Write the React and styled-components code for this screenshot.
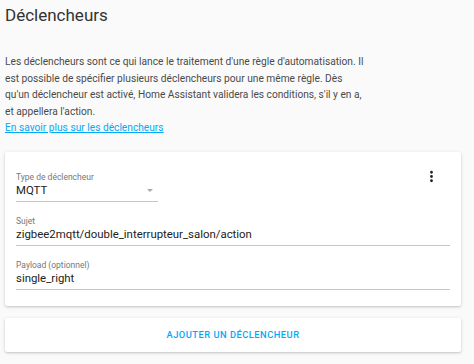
import React from 'react';
import styled, { createGlobalStyle } from 'styled-components';

const GlobalStyle = createGlobalStyle`
  html, body {
    margin: 0;
    padding: 0;
    background: #fafafa;
  }
  body {
    font-family: Roboto, 'Noto Sans', sans-serif;
    -webkit-font-smoothing: antialiased;
  }
`;

const Section = styled.div`
  padding: 3px 13px 12px 5px;
`;

const Title = styled.h1`
  margin: 0;
  font-size: 17px;
  line-height: 24px;
  font-weight: 400;
  color: #333;
`;

const Intro = styled.p`
  margin: 27px 0 15px;
  max-width: 362px;
  font-size: 10.2px;
  line-height: 16.5px;
  color: #4a4a4a;
`;

const Link = styled.a`
  color: #03a9f4;
  text-decoration: underline;
`;

const Card = styled.div`
  background: #fff;
  border-radius: 2px;
  box-shadow: 0 1px 2px rgba(0, 0, 0, 0.14), 0 1px 4px rgba(0, 0, 0, 0.1);
  margin-bottom: 12px;
  padding: ${p => (p.$action ? '0' : '20px 11px 16px')};
`;

const HeaderRow = styled.div`
  display: flex;
  align-items: flex-start;
  justify-content: space-between;
`;

const Field = styled.div`
  width: ${p => p.$width || 'auto'};
  margin-top: ${p => (p.$first ? '0' : '14px')};
  border-bottom: 1px solid rgba(0, 0, 0, 0.22);
  padding-bottom: 3px;
  position: relative;
`;

const Label = styled.div`
  font-size: 8.5px;
  line-height: 10px;
  color: #777;
`;

const Value = styled.div`
  font-size: 11.4px;
  line-height: 16px;
  color: #222;
`;

const Arrow = styled.span`
  position: absolute;
  right: 5px;
  bottom: 9px;
  width: 0;
  height: 0;
  border-left: 3px solid transparent;
  border-right: 3px solid transparent;
  border-top: 3px solid #aaa;
`;

const MenuButton = styled.div`
  width: 17px;
  height: 17px;
  margin: -4px 10px 0 0;
  display: flex;
  align-items: center;
  justify-content: center;
`;

const AddButton = styled.div`
  height: 34px;
  display: flex;
  align-items: center;
  justify-content: center;
  font-size: 9.3px;
  font-weight: 500;
  letter-spacing: 0.5px;
  color: #03a9f4;
  text-transform: uppercase;
`;

const DotsIcon = () => (
  <svg width="17" height="17" viewBox="0 0 24 24">
    <path
      fill="#222"
      d="M12 16a2 2 0 1 1 0 4 2 2 0 0 1 0-4zm0-6a2 2 0 1 1 0 4 2 2 0 0 1 0-4zm0-6a2 2 0 1 1 0 4 2 2 0 0 1 0-4z"
    />
  </svg>
);

export default function App() {
  return (
    <>
      <GlobalStyle />
      <Section>
        <Title>Déclencheurs</Title>
        <Intro>
          Les déclencheurs sont ce qui lance le traitement d'une règle d'automatisation. Il est
          possible de spécifier plusieurs déclencheurs pour une même règle. Dès qu'un déclencheur
          est activé, Home Assistant validera les conditions, s'il y en a, et appellera l'action.
          <br />
          <Link href="#">En savoir plus sur les déclencheurs</Link>
        </Intro>
        <Card>
          <HeaderRow>
            <Field $first $width="142px">
              <Label>Type de déclencheur</Label>
              <Value>MQTT</Value>
              <Arrow />
            </Field>
            <MenuButton>
              <DotsIcon />
            </MenuButton>
          </HeaderRow>
          <Field>
            <Label>Sujet</Label>
            <Value>zigbee2mqtt/double_interrupteur_salon/action</Value>
          </Field>
          <Field>
            <Label>Payload (optionnel)</Label>
            <Value>single_right</Value>
          </Field>
        </Card>
        <Card $action>
          <AddButton>Ajouter un déclencheur</AddButton>
        </Card>
      </Section>
    </>
  );
}
